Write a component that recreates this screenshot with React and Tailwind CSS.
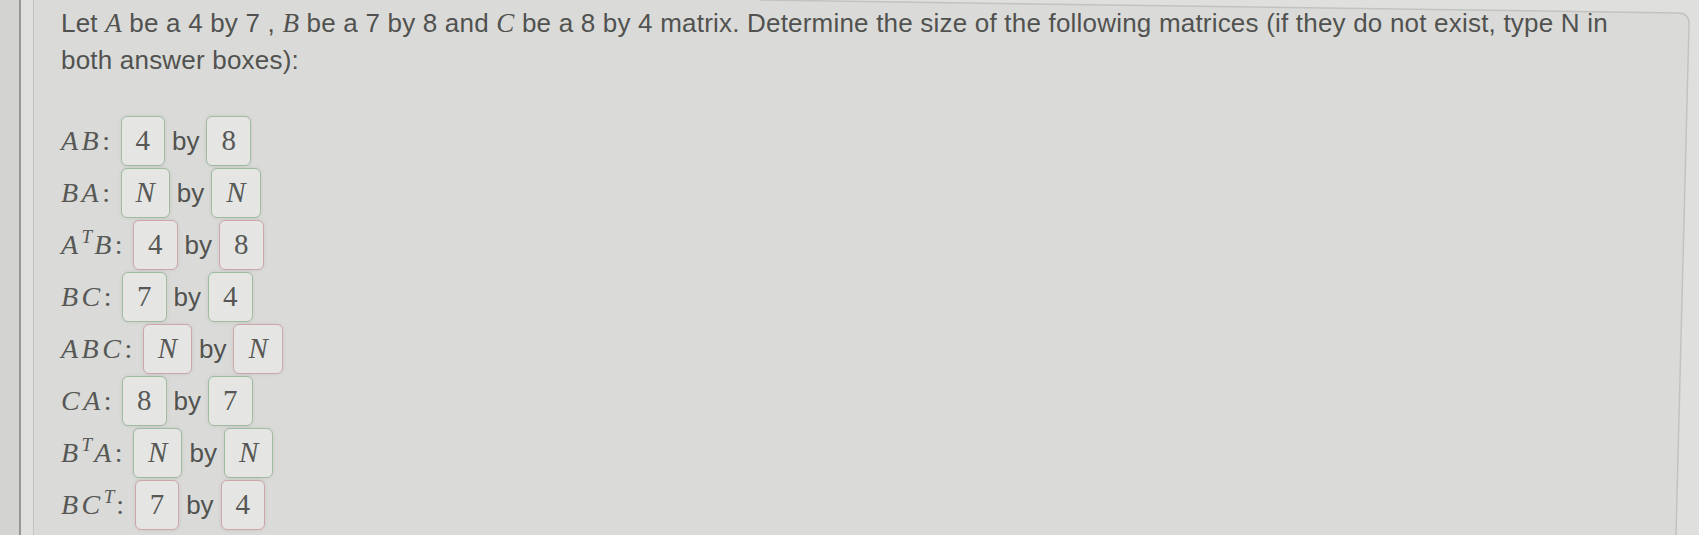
import React from "react";

const serif = { fontFamily: '"Liberation Serif", "Times New Roman", serif' };
const sans = { fontFamily: '"Liberation Sans", Arial, sans-serif' };

function Box({ v, ok, italic }) {
  return (
    <div
      className={
        "h-[50px] min-w-[43px] px-[14px] flex items-center justify-center rounded-[6px] border-[1.5px] bg-[#e5e6e3] text-[29px] text-[#575856] shadow-[0_0_4px_rgba(0,0,0,0.08)] " +
        (ok ? "border-[#9fbba0]" : "border-[#cda6a7]") +
        (italic ? " italic" : "")
      }
      style={serif}
    >
      {v}
    </div>
  );
}

function Label({ children }) {
  return (
    <div className="flex items-baseline text-[28px] text-[#575856] tracking-[3.5px]" style={serif}>
      {children}
      <span className="not-italic">:</span>
    </div>
  );
}

function I({ children }) {
  return <span className="italic">{children}</span>;
}
function Sup({ children }) {
  return <span className="italic text-[19px] relative -top-[11px] mr-[1px] tracking-[1px]">{children}</span>;
}

const rows = [
  { label: <I>AB</I>, a: "4", b: "8", ok: true },
  { label: <I>BA</I>, a: "N", b: "N", ok: true },
  { label: <><I>A</I><Sup>T</Sup><I>B</I></>, a: "4", b: "8", ok: false },
  { label: <I>BC</I>, a: "7", b: "4", ok: true },
  { label: <I>ABC</I>, a: "N", b: "N", ok: false },
  { label: <I>CA</I>, a: "8", b: "7", ok: true },
  { label: <><I>B</I><Sup>T</Sup><I>A</I></>, a: "N", b: "N", ok: true },
  { label: <><I>BC</I><Sup>T</Sup></>, a: "7", b: "4", ok: false },
];

export default function App() {
  return (
    <div className="relative w-[1699px] h-[535px] overflow-hidden bg-[#dadbd8] flex">
      <div className="w-[19px] shrink-0 bg-[#d3d4d1]" />
      <div className="w-[2px] shrink-0 bg-[#959794]" />
      <div className="w-[13px] shrink-0 bg-[#e0e1de] border-r border-[#c3c4c1]" />
      <div className="flex-1 pl-[27px] pt-[5px]">
        <p className="text-[26px] leading-[37px] tracking-[0.2px] text-[#515250]" style={sans}>
          Let <span className="italic text-[27px]" style={serif}>A</span> be a 4 by 7 ,{" "}
          <span className="italic text-[27px]" style={serif}>B</span> be a 7 by 8 and{" "}
          <span className="italic text-[27px]" style={serif}>C</span> be a 8 by 4 matrix. Determine the size
          of the following matrices (if they do not exist, type N in
          <br />
          both answer boxes):
        </p>
        <div className="mt-[37px] flex flex-col gap-[2px]">
          {rows.map((r, i) => (
            <div key={i} className="flex items-center h-[50px]">
              <Label>{r.label}</Label>
              <div className="ml-[7px]">
                <Box v={r.a} ok={r.ok} italic={r.a === "N"} />
              </div>
              <span className="mx-[7px] text-[26px] text-[#515250]" style={sans}>
                by
              </span>
              <Box v={r.b} ok={r.ok} italic={r.b === "N"} />
            </div>
          ))}
        </div>
      </div>
      <svg className="absolute inset-0 pointer-events-none" width="1699" height="535">
        <path
          d="M760 0 L1678 13 Q1689 13 1689 24 L1676 535 L1699 535 L1699 0 Z"
          fill="#dfe0dd"
        />
        <path
          d="M760 0 L1678 13 Q1689 13 1689 24 L1676 535"
          fill="none"
          stroke="#c2c3c0"
          strokeWidth="1.5"
        />
      </svg>
    </div>
  );
}
